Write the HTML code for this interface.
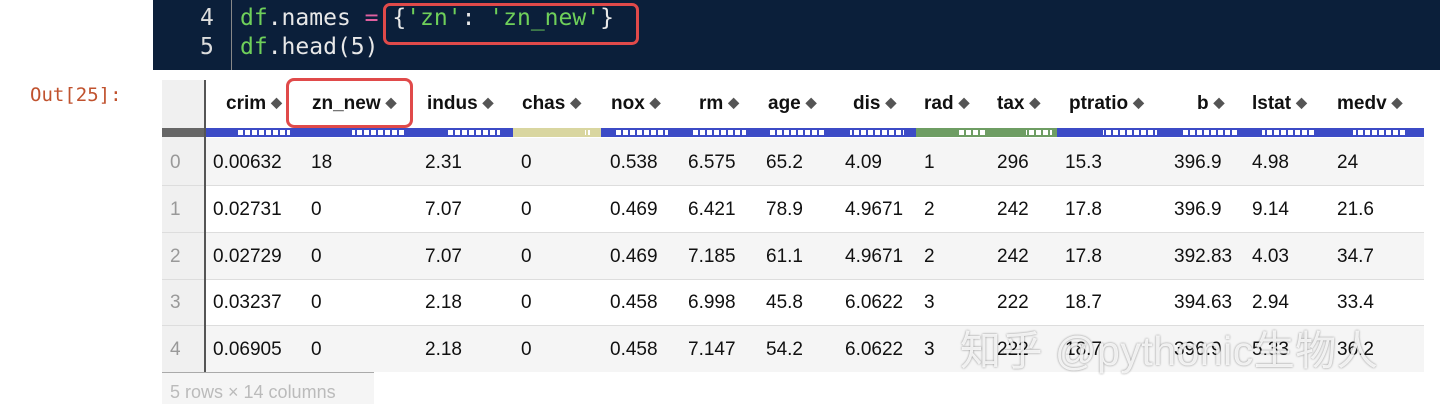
<!DOCTYPE html><html><head><meta charset="utf-8"><style>
body{margin:0;width:1440px;height:404px;background:#fff;position:relative;overflow:hidden;font-family:"Liberation Sans",sans-serif}
.a{position:absolute}
.code{left:153px;top:0;width:1287px;height:70px;background:#0b1f3a}
.mono{font-family:"DejaVu Sans Mono","Liberation Mono",monospace;font-size:23px;white-space:pre}
.g{color:#6fd05a}.w{color:#e8e8e8}.p{color:#e060a0}
.hd{top:93px;font-weight:bold;font-size:19px;color:#111;white-space:nowrap}
.hd i{font-style:normal;color:#555;font-size:14px;margin-left:5px;position:relative;top:-2px}
.c{font-size:19px;color:#111}
.ix{font-size:19px;color:#999}
</style></head><body>
<div class="a code"></div>
<div class="a mono" style="left:200px;top:5px;color:#ddd">4</div>
<div class="a mono" style="left:200px;top:34px;color:#ddd">5</div>
<div class="a" style="left:231px;top:0;width:1px;height:70px;background:#888"></div>
<div class="a mono" style="left:240px;top:5px"><span class="g">df</span><span class="w">.names </span><span class="p">=</span><span class="w"> {</span><span class="g">'zn'</span><span class="w">: </span><span class="g">'zn_new'</span><span class="w">}</span></div>
<div class="a mono" style="left:240px;top:34px"><span class="g">df</span><span class="w">.head(5)</span></div>
<div class="a" style="left:383px;top:3px;width:250px;height:36px;border:3px solid #e04a4a;border-radius:7px"></div>

<div class="a mono" style="left:30px;top:84px;font-size:19px;color:#c0522e">Out[25]:</div>

<div class="a" style="left:162px;top:80px;width:43px;height:292px;background:#f0f0f0"></div>
<div class="a" style="left:205px;top:138px;width:1219px;height:47px;background:#f5f5f5"></div>
<div class="a" style="left:205px;top:232px;width:1219px;height:47px;background:#f5f5f5"></div>
<div class="a" style="left:205px;top:325px;width:1219px;height:47px;background:#f5f5f5"></div>
<div class="a" style="left:162px;top:185px;width:1262px;height:1px;background:#ddd"></div>
<div class="a" style="left:162px;top:232px;width:1262px;height:1px;background:#ddd"></div>
<div class="a" style="left:162px;top:279px;width:1262px;height:1px;background:#ddd"></div>
<div class="a" style="left:162px;top:325px;width:1262px;height:1px;background:#ddd"></div>
<div class="a" style="left:162px;top:372px;width:212px;height:1px;background:#aaa"></div>
<div class="a" style="left:162px;top:373px;width:212px;height:31px;background:#f5f5f5"></div>
<div class="a" style="left:170px;top:382px;font-size:18px;color:#bbb">5 rows × 14 columns</div>

<div class="a" style="left:162px;top:128px;width:43px;height:9px;background:#666"></div>
<div class="a" style="left:205px;top:128px;width:308px;height:9px;background:#3c4bc6"></div>
<div class="a" style="left:513px;top:128px;width:88px;height:9px;background:#d9d6a0"></div>
<div class="a" style="left:601px;top:128px;width:315px;height:9px;background:#3c4bc6"></div>
<div class="a" style="left:916px;top:128px;width:141px;height:9px;background:#6e9d63"></div>
<div class="a" style="left:1057px;top:128px;width:367px;height:9px;background:#3c4bc6"></div>
<svg class="a" style="left:0;top:0" width="1440" height="404">
<defs><pattern id="d" width="7" height="5" patternUnits="userSpaceOnUse"><rect width="5" height="5" fill="#fff"/></pattern></defs>
<g fill="url(#d)">
<rect x="236" y="130" width="54" height="5"/><rect x="352" y="130" width="54" height="5"/><rect x="446" y="130" width="54" height="5"/>
<rect x="585" y="130" width="5" height="5"/>
<rect x="614" y="130" width="54" height="5"/><rect x="692" y="130" width="54" height="5"/><rect x="770" y="130" width="54" height="5"/><rect x="850" y="130" width="54" height="5"/>
<rect x="959" y="130" width="26" height="5"/><rect x="1026" y="130" width="26" height="5"/>
<rect x="1103" y="130" width="54" height="5"/><rect x="1183" y="130" width="54" height="5"/><rect x="1262" y="130" width="54" height="5"/><rect x="1353" y="130" width="54" height="5"/>
</g></svg>
<div class="a" style="left:204px;top:80px;width:2px;height:292px;background:#555"></div>

<div class="a hd" style="left:226px">crim<i>◆</i></div>
<div class="a hd" style="left:312px">zn_new<i>◆</i></div>
<div class="a hd" style="left:427px">indus<i>◆</i></div>
<div class="a hd" style="left:522px">chas<i>◆</i></div>
<div class="a hd" style="left:611px">nox<i>◆</i></div>
<div class="a hd" style="left:699px">rm<i>◆</i></div>
<div class="a hd" style="left:768px">age<i>◆</i></div>
<div class="a hd" style="left:853px">dis<i>◆</i></div>
<div class="a hd" style="left:924px">rad<i>◆</i></div>
<div class="a hd" style="left:997px">tax<i>◆</i></div>
<div class="a hd" style="left:1069px">ptratio<i>◆</i></div>
<div class="a hd" style="left:1197px">b<i>◆</i></div>
<div class="a hd" style="left:1252px">lstat<i>◆</i></div>
<div class="a hd" style="left:1337px">medv<i>◆</i></div>
<div class="a" style="left:286px;top:78px;width:121px;height:44px;border:3px solid #e04a4a;border-radius:8px"></div>

<div id="rows"></div>
<script>
var L=[213,311,425,521,610,688,766,845,924,997,1065,1174,1252,1337];
var D=[["0.00632","18","2.31","0","0.538","6.575","65.2","4.09","1","296","15.3","396.9","4.98","24"],
["0.02731","0","7.07","0","0.469","6.421","78.9","4.9671","2","242","17.8","396.9","9.14","21.6"],
["0.02729","0","7.07","0","0.469","7.185","61.1","4.9671","2","242","17.8","392.83","4.03","34.7"],
["0.03237","0","2.18","0","0.458","6.998","45.8","6.0622","3","222","18.7","394.63","2.94","33.4"],
["0.06905","0","2.18","0","0.458","7.147","54.2","6.0622","3","222","18.7","396.9","5.33","36.2"]];
var h="";for(var r=0;r<5;r++){var t=152+r*46.8;h+='<div class="a ix" style="left:170px;top:'+t+'px">'+r+'</div>';
for(var c=0;c<14;c++)h+='<div class="a c" style="left:'+L[c]+'px;top:'+t+'px">'+D[r][c]+'</div>';}
document.getElementById("rows").innerHTML=h;
</script>
<div class="a" style="left:960px;top:317px;font-size:41px;letter-spacing:0.5px;color:rgba(255,255,255,0.85);text-shadow:0 0 2px rgba(0,0,0,0.45);font-family:'Liberation Sans','Noto Sans CJK SC',sans-serif;white-space:nowrap">知乎 @pythonic生物人</div>
</body></html>
